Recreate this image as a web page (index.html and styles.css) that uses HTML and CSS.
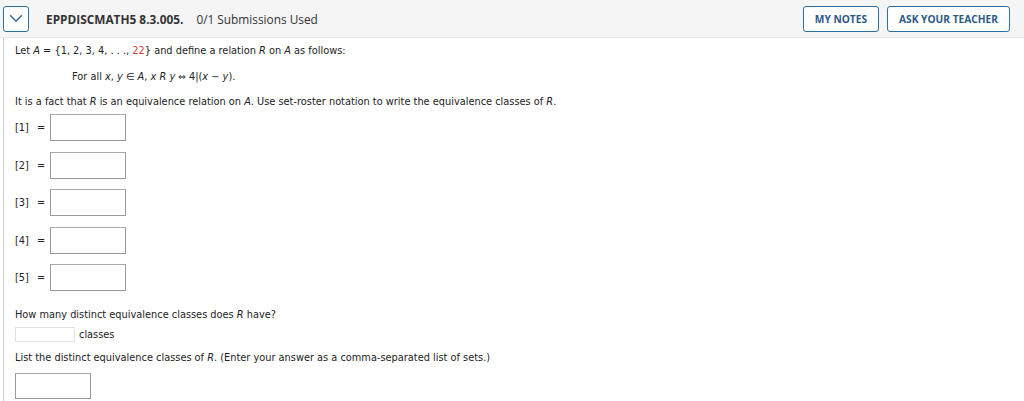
FILE: index.html
```html
<!DOCTYPE html>
<html>
<head>
<meta charset="utf-8">
<link rel="stylesheet" href="styles.css">
</head>
<body>
<div class="header">
  <div class="toggle">
    <svg width="14" height="9" viewBox="0 0 14 9"><path d="M1.2 1.3 L7 7.2 L12.8 1.3" fill="none" stroke="#2f6ea5" stroke-width="1.6"/></svg>
  </div>
  <span class="title">EPPDISCMATH5 8.3.005.</span>
  <span class="subs">0/1 Submissions Used</span>
  <div class="spacer"></div>
  <div class="btn">MY NOTES</div>
  <div class="btn">ASK YOUR TEACHER</div>
</div>
<div class="content">
  <p class="line1">Let <i>A</i> = {1, 2, 3, 4, . . ., <span class="red">22</span>} and define a relation <i>R</i> on <i>A</i> as follows:</p>
  <p class="line2">For all <i>x</i>, <i>y</i> ∈ <i>A</i>, <i>x R y</i> <span class="arrow">⇔</span> 4|(<i>x</i> − <i>y</i>).</p>
  <p class="line3">It is a fact that <i>R</i> is an equivalence relation on <i>A</i>. Use set-roster notation to write the equivalence classes of <i>R</i>.</p>
  <div class="rows">
    <div class="row"><span class="lbl">[1]</span><span class="eq">=</span><div class="box"></div></div>
    <div class="row"><span class="lbl">[2]</span><span class="eq">=</span><div class="box"></div></div>
    <div class="row"><span class="lbl">[3]</span><span class="eq">=</span><div class="box"></div></div>
    <div class="row"><span class="lbl">[4]</span><span class="eq">=</span><div class="box"></div></div>
    <div class="row"><span class="lbl">[5]</span><span class="eq">=</span><div class="box"></div></div>
  </div>
  <p class="q2">How many distinct equivalence classes does <i>R</i> have?</p>
  <div class="numrow"><div class="numbox"></div><span>classes</span></div>
  <p class="q3">List the distinct equivalence classes of <i>R</i>. (Enter your answer as a comma-separated list of sets.)</p>
  <div class="box last"></div>
</div>
</body>
</html>
```
FILE: styles.css
```css
html, body { margin: 0; padding: 0; background: #fff; }
body { width: 1024px; height: 401px; overflow: hidden; }
.header {
  height: 38px;
  box-sizing: border-box;
  background: #f5f5f5;
  border-bottom: 1px solid #e9e9e9;
  display: flex;
  align-items: center;
  padding: 0 14px 0 3px;
  font-family: "Open Sans", sans-serif;
  color: #333;
}
.toggle {
  width: 26px; height: 26px; box-sizing: border-box;
  border: 1px solid #2f6ea5; border-radius: 3px; background: #fff;
  display: flex; align-items: center; justify-content: center;
}
.title { font-weight: 700; font-size: 11.85px; margin-left: 17px; }
.subs { font-size: 11.85px; margin-left: 13px; }
.spacer { flex: 1; }
.btn {
  height: 26px; box-sizing: border-box;
  border: 1px solid #2f6ea5; border-radius: 3px; background: #fff;
  font-size: 10.2px; font-weight: 700; color: #2c5a85;
  display: flex; align-items: center; padding: 0 11px;
  margin-left: 8px;
}
.content {
  margin-left: 3px;
  border-left: 1px solid #cfcfcf;
  padding-left: 11px;
  height: 363px;
  font-family: Verdana, "DejaVu Sans", sans-serif;
  font-size: 9.8px;
  color: #222;
}
.content p { margin: 0; line-height: 14px; }
.line1 { padding-top: 6px; }
.line2 { padding-top: 12px; padding-left: 57px; }
.line3 { padding-top: 11px; }
.red { color: #d43b2f; }
.arrow { font-size: 9px; }
.rows { padding-top: 5px; }
.row { display: flex; align-items: center; height: 27px; margin-bottom: 10.5px; }
.lbl { width: 22px; }
.eq { width: 13px; }
.box { width: 76px; height: 27px; box-sizing: border-box; border: 1px solid #999; border-top-color: #aaa; }
.q2 { padding-top: 6px; }
.numrow { display: flex; align-items: center; margin-top: 5px; height: 15px; }
.numbox { width: 60px; height: 15px; box-sizing: border-box; border: 1px solid #e2e2e2; margin-right: 4px; }
.q3 { padding-top: 9px; }
.last { margin-top: 8px; width: 76px; height: 26px; }
```
